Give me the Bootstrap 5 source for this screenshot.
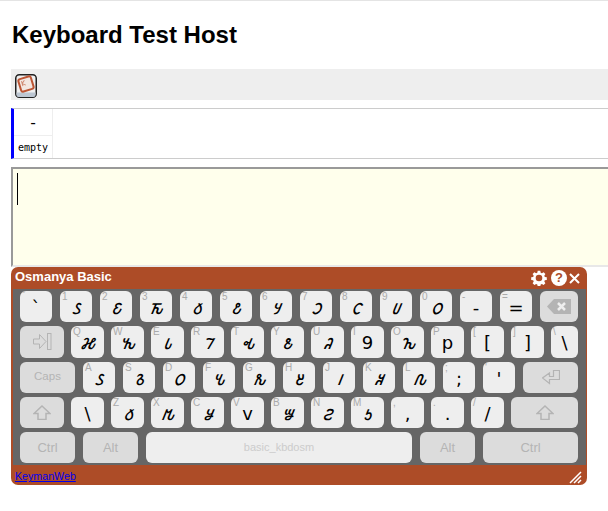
<!DOCTYPE html>
<html lang="en">
<head>
  <meta charset="UTF-8" />
  <meta name="viewport" content="width=device-width, initial-scale=1" />
  <title>Keyboard Test Host</title>
  <link href="https://cdn.jsdelivr.net/npm/bootstrap@5.3.3/dist/css/bootstrap.min.css" rel="stylesheet" />
  <style>
    html, body { overflow: hidden; }
    body { font-family: "Liberation Sans", Arial, sans-serif; color: #000; height: 511px; border-top: 1px solid #e4e4e4; }
    .host-title { font-size: 24px; font-weight: 700; line-height: 28px; margin: 20px 0 0 11px; padding-left: 1px; }
    .tool-strip { background: #eee; height: 31px; margin: 20px 0 0 11px; padding: 4px 4px; }
    .kbd-toggle { display: block; width: 22px; height: 24px; padding: 0; border: 0; background: none; }
    .state-box { margin: 8px 0 0 11px; height: 51px; border-left: 3px solid #00f; border-top: 1px solid #ccc; border-bottom: 1px solid #ccc; font-family: "DejaVu Sans Mono", monospace; font-size: 10px; }
    .state-col { width: 39px; border-right: 1px solid #eee; }
    .state-char { height: 27px; padding-top: 1px; border-bottom: 1px solid #eee; font-size: 16px; }
    .state-name { height: 22px; }
    .test-area { margin: 8px 0 0 11px; height: 100px; border: 2px solid #999; border-right: 0; border-bottom-color: #e8e8e8; background: #ffffec; padding: 4px 4px; }
    .test-caret { width: 1px; height: 32px; background: #000; }
    .osk { margin-left: 11px; width: 576px; height: 218px; background: #ad4c27; border-radius: 7px; }
    .osk-title { height: 22px; padding: 0 7px 0 4px; color: #fff; font-size: 13px; font-weight: 700; line-height: 20px; }
    .osk-name { margin-bottom: 2px; }
    .osk-close { margin-left: 2px; }
    .osk-help { width: 16px; height: 16px; margin-left: 4px; border-radius: 50%; background: #fff; color: #ad4c27; font-size: 13px; line-height: 16px; text-align: center; }
    .osk-body { margin: 0 1px 0 2px; height: 176px; background: #666; padding: 2px 8px 0 7px; }
    .osk-row { height: 31.25px; margin-bottom: 4px; gap: 8px; }
    .osk-row.tight { gap: 7px; }
    .osk-key { position: relative; flex: none; display: flex; align-items: center; justify-content: center; width: 32px; height: 100%; padding-top: 3px; border-radius: 6px; background: #eee; font-family: "DejaVu Sans", sans-serif; font-size: 18px; line-height: 1; }
    .osk-row.tight .osk-key { width: 33px; }
    .osk-row .osk-key.fn { background: #dcdcdc; color: #b4b4b4; padding-top: 0; font-family: "Liberation Sans", sans-serif; font-size: 13px; }
    .osk-row .osk-key.w27 { width: 27px; }
    .osk-row .osk-key.w38 { width: 38px; }
    .osk-row .osk-key.w44 { width: 44px; }
    .osk-row .osk-key.w55 { width: 55px; }
    .osk-row .osk-key.w67 { width: 67px; }
    .osk-row .osk-key.w95 { width: 95px; }
    .osk-row .osk-key.osk-caps { font-size: 11.5px; }
    .osk-row .osk-key.osk-space { width: 266px; background: #eee; color: #ccc; font-size: 11px; }
    .osk-cap { position: absolute; left: 2px; top: 1px; font-family: "Liberation Sans", sans-serif; font-size: 10px; font-style: normal; line-height: 10px; color: #aaa; }
    .osm { font-style: italic; }
    .osk-foot { height: 20px; padding: 2px 5px 0 4px; font-size: 10.67px; }
    .osk-foot a { color: #00e; }
    .osk-grip { margin-bottom: 1px; }
  </style>
</head>
<body>
  <h1 class="host-title">Keyboard Test Host</h1>

  <div class="tool-strip">
    <button class="kbd-toggle" type="button" aria-label="Toggle keyboard">
      <svg width="22" height="24" viewBox="0 0 22 24">
        <rect x=".75" y=".75" width="20.500" height="22.500" rx="3.500" fill="#efefef" stroke="#222" stroke-width="1.500"/>
        <path d="M1.500 18.500h19V21a2 2 0 0 1-2 2h-15a2 2 0 0 1-2-2z" fill="#bcc6d2"/>
        <g transform="rotate(-17 11 10)">
          <rect x="4.500" y="3.500" width="13" height="13" rx="2" fill="#f3e7e1" stroke="#bd5534" stroke-width="2"/>
          <path d="M7.500 6v5M10.500 6l-3 2.500 3 2.500" fill="none" stroke="#d08a72"/>
        </g>
      </svg>
    </button>
  </div>

  <div class="state-box d-flex">
    <div class="state-col text-center">
      <div class="state-char d-flex align-items-center justify-content-center">-</div>
      <div class="state-name d-flex align-items-center justify-content-center">empty</div>
    </div>
  </div>

  <div class="test-area"><div class="test-caret"></div></div>

  <div class="osk">
    <div class="osk-title d-flex align-items-center">
      <span class="osk-name me-auto">Osmanya Basic</span>
      <svg width="16" height="16" viewBox="0 0 16 16" aria-hidden="true">
        <path fill="#fff" fill-rule="evenodd" d="M6.700.8h2.600l.4 2 1.200.5 1.700-1.100 1.800 1.800-1.100 1.700.5 1.200 2 .4v2.600l-2 .4-.5 1.200 1.100 1.700-1.800 1.800-1.700-1.100-1.200.5-.4 2H6.700l-.4-2-1.200-.5-1.700 1.100-1.800-1.800 1.100-1.700-.5-1.200-2-.4V7.300l2-.4.5-1.200-1.100-1.700 1.800-1.800 1.700 1.100 1.200-.5zM8 4.700a3.300 3.300 0 1 0 0 6.600 3.300 3.300 0 0 0 0-6.600z"/>
      </svg>
      <span class="osk-help">?</span>
      <svg class="osk-close" width="11" height="11" viewBox="0 0 11 11" aria-hidden="true">
        <path d="M1 1l9 9M10 1l-9 9" stroke="#fff" stroke-width="2" fill="none"/>
      </svg>
    </div>

    <div class="osk-body">
      <div class="osk-row d-flex">
        <div class="osk-key"><span class="osk-cap">`</span>`</div>
        <div class="osk-key osm"><span class="osk-cap">1</span>𐒡</div>
        <div class="osk-key osm"><span class="osk-cap">2</span>𐒢</div>
        <div class="osk-key osm"><span class="osk-cap">3</span>𐒣</div>
        <div class="osk-key osm"><span class="osk-cap">4</span>𐒤</div>
        <div class="osk-key osm"><span class="osk-cap">5</span>𐒥</div>
        <div class="osk-key osm"><span class="osk-cap">6</span>𐒦</div>
        <div class="osk-key osm"><span class="osk-cap">7</span>𐒧</div>
        <div class="osk-key osm"><span class="osk-cap">8</span>𐒨</div>
        <div class="osk-key osm"><span class="osk-cap">9</span>𐒩</div>
        <div class="osk-key osm"><span class="osk-cap">0</span>𐒠</div>
        <div class="osk-key"><span class="osk-cap">-</span>-</div>
        <div class="osk-key"><span class="osk-cap">=</span>=</div>
        <div class="osk-key fn w38">
          <svg width="24" height="15" viewBox="0 0 24 15" aria-hidden="true">
            <path d="M7 0h17v15H7L0 7.500z" fill="#b4b4b4"/>
            <path d="M11 4l7 7M18 4l-7 7" stroke="#eee" stroke-width="2.500" fill="none"/>
          </svg>
        </div>
      </div>

      <div class="osk-row tight d-flex">
        <div class="osk-key fn w44">
          <svg width="19" height="17" viewBox="0 0 19 17" aria-hidden="true">
            <path d="M.5 6h6V1.500L13 8.500l-6.500 7V11h-6z" fill="none" stroke="#b4b4b4"/>
            <rect x="14.500" y=".5" width="3.500" height="16" fill="none" stroke="#b4b4b4"/>
          </svg>
        </div>
        <div class="osk-key osm"><span class="osk-cap">Q</span>𐒎</div>
        <div class="osk-key osm"><span class="osk-cap">W</span>𐒓</div>
        <div class="osk-key osm"><span class="osk-cap">E</span>𐒗</div>
        <div class="osk-key osm"><span class="osk-cap">R</span>𐒇</div>
        <div class="osk-key osm"><span class="osk-cap">T</span>𐒂</div>
        <div class="osk-key osm"><span class="osk-cap">Y</span>𐒕</div>
        <div class="osk-key osm"><span class="osk-cap">U</span>𐒚</div>
        <div class="osk-key"><span class="osk-cap">I</span>9</div>
        <div class="osk-key osm"><span class="osk-cap">O</span>𐒙</div>
        <div class="osk-key"><span class="osk-cap">P</span>p</div>
        <div class="osk-key"><span class="osk-cap">[</span>[</div>
        <div class="osk-key"><span class="osk-cap">]</span>]</div>
        <div class="osk-key w27"><span class="osk-cap">\</span>\</div>
      </div>

      <div class="osk-row d-flex">
        <div class="osk-key fn w55 osk-caps">Caps</div>
        <div class="osk-key osm"><span class="osk-cap">A</span>𐒖</div>
        <div class="osk-key osm"><span class="osk-cap">S</span>𐒈</div>
        <div class="osk-key osm"><span class="osk-cap">D</span>𐒆</div>
        <div class="osk-key osm"><span class="osk-cap">F</span>𐒍</div>
        <div class="osk-key osm"><span class="osk-cap">G</span>𐒌</div>
        <div class="osk-key osm"><span class="osk-cap">H</span>𐒔</div>
        <div class="osk-key osm"><span class="osk-cap">J</span>𐒃</div>
        <div class="osk-key osm"><span class="osk-cap">K</span>𐒏</div>
        <div class="osk-key osm"><span class="osk-cap">L</span>𐒐</div>
        <div class="osk-key"><span class="osk-cap">;</span>;</div>
        <div class="osk-key"><span class="osk-cap">'</span>'</div>
        <div class="osk-key fn w55">
          <svg width="18" height="15" viewBox="0 0 18 15" aria-hidden="true">
            <path d="M11.500.5h6v9H7.500v4L.5 8l7-5v3.500h4z" fill="none" stroke="#b4b4b4" stroke-width="1.200"/>
          </svg>
        </div>
      </div>

      <div class="osk-row tight d-flex">
        <div class="osk-key fn w44">
          <svg width="18" height="15" viewBox="0 0 18 15" aria-hidden="true">
            <path d="M9 1l8 7.500h-4v6H5v-6H1z" fill="none" stroke="#b4b4b4" stroke-width="1.500"/>
          </svg>
        </div>
        <div class="osk-key">\</div>
        <div class="osk-key osm"><span class="osk-cap">Z</span>𐒀</div>
        <div class="osk-key osm"><span class="osk-cap">X</span>𐒄</div>
        <div class="osk-key osm"><span class="osk-cap">C</span>𐒋</div>
        <div class="osk-key"><span class="osk-cap">V</span>v</div>
        <div class="osk-key osm"><span class="osk-cap">B</span>𐒁</div>
        <div class="osk-key osm"><span class="osk-cap">N</span>𐒒</div>
        <div class="osk-key osm"><span class="osk-cap">M</span>𐒑</div>
        <div class="osk-key"><span class="osk-cap">,</span>,</div>
        <div class="osk-key"><span class="osk-cap">.</span>.</div>
        <div class="osk-key"><span class="osk-cap">/</span>/</div>
        <div class="osk-key fn w67">
          <svg width="18" height="15" viewBox="0 0 18 15" aria-hidden="true">
            <path d="M9 1l8 7.500h-4v6H5v-6H1z" fill="none" stroke="#b4b4b4" stroke-width="1.500"/>
          </svg>
        </div>
      </div>

      <div class="osk-row d-flex">
        <div class="osk-key fn w55">Ctrl</div>
        <div class="osk-key fn w55">Alt</div>
        <div class="osk-key fn osk-space">basic_kbdosm</div>
        <div class="osk-key fn w55">Alt</div>
        <div class="osk-key fn w95">Ctrl</div>
      </div>
    </div>

    <div class="osk-foot d-flex align-items-center justify-content-between">
      <a href="#">KeymanWeb</a>
      <svg class="osk-grip align-self-end" width="13" height="14" viewBox="0 0 13 14" aria-hidden="true">
        <path d="M1 13L12 2M5 13l7-7M9 13l3-3" stroke="#fff" stroke-width="1.500" fill="none"/>
      </svg>
    </div>
  </div>

  <script src="https://cdn.jsdelivr.net/npm/bootstrap@5.3.3/dist/js/bootstrap.bundle.min.js"></script>
</body>
</html>
